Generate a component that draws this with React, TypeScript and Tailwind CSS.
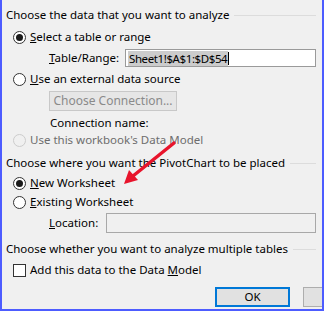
import React from "react";

const font = { fontFamily: '"Noto Sans", "Segoe UI", sans-serif' };

function Radio({ checked, disabled }: { checked?: boolean; disabled?: boolean }) {
  return (
    <span
      className={`w-[13px] h-[13px] rounded-full border flex items-center justify-center shrink-0 ${
        disabled ? "border-[#cccccc] bg-[#f0f0f0]" : "border-[#333333] bg-white"
      }`}
    >
      {checked && <span className="w-[7px] h-[7px] rounded-full bg-[#1a1a1a]" />}
    </span>
  );
}

function Header({ children }: { children: React.ReactNode }) {
  return (
    <div className="flex items-center h-[16px] pl-[4px] pr-[6px]">
      <span className="whitespace-nowrap text-black">{children}</span>
      <span className="flex-1 h-px bg-[#dcdcdc] ml-[5px]" />
    </div>
  );
}

export default function App() {
  return (
    <div
      className="relative w-[324px] h-[311px] bg-[#f0f0f0] border-l-2 border-r-2 border-b-2 border-[#4d5cff] overflow-hidden text-[11.5px] leading-[16px] text-black"
      style={font}
    >
      <div className="flex flex-col">
        <div className="mt-[7px]">
          <Header>Choose the data that you want to analyze</Header>
        </div>
        <div className="mt-[6px] flex items-center h-[16px] pl-[11px] gap-[4px]">
          <Radio checked />
          <span>
            <span className="underline">S</span>elect a table or range
          </span>
        </div>
        <div className="mt-[4px] flex items-center h-[18px] pl-[47px]">
          <span className="w-[76px] shrink-0">
            <span className="underline">T</span>able/Range:
          </span>
          <div className="flex-1 mr-[6px] h-[18px] bg-white border border-[#9a9a9a] flex items-center pl-[2px]">
            <span className="bg-[#cccccc] px-px leading-[15px] tracking-[-0.4px]">Sheet1!$A$1:$D$54</span>
            <span className="w-px h-[13px] bg-black" />
          </div>
        </div>
        <div className="mt-[4px] flex items-center h-[16px] pl-[11px] gap-[4px]">
          <Radio />
          <span>
            <span className="underline">U</span>se an external data source
          </span>
        </div>
        <div className="mt-[4px] pl-[47px] h-[20px] flex">
          <div className="w-[128px] h-[20px] bg-[#e6e6e6] border border-[#c8c8c8] text-[#8a8a8a] text-[12px] flex items-center justify-center">
            Choose Connection...
          </div>
        </div>
        <div className="mt-[4px] h-[16px] pl-[48px] text-black flex items-center">Connection name:</div>
        <div className="mt-[1px] flex items-center h-[16px] pl-[11px] gap-[4px] text-[#6d6d6d]">
          <Radio disabled />
          <span>Use this workbook's Data Model</span>
        </div>
        <div className="mt-[7px]">
          <Header>Choose where you want the PivotChart to be placed</Header>
        </div>
        <div className="mt-[4px] flex items-center h-[16px] pl-[11px] gap-[4px]">
          <Radio checked />
          <span>
            <span className="underline">N</span>ew Worksheet
          </span>
        </div>
        <div className="mt-[3px] flex items-center h-[16px] pl-[11px] gap-[4px]">
          <Radio />
          <span>
            <span className="underline">E</span>xisting Worksheet
          </span>
        </div>
        <div className="mt-[3px] flex items-center h-[20px] pl-[47px]">
          <span className="w-[57px] shrink-0">
            <span className="underline">L</span>ocation:
          </span>
          <div className="flex-1 mr-[6px] h-[20px] bg-[#f0f0f0] border border-[#a8a8a8]" />
        </div>
        <div className="mt-[8px]">
          <Header>Choose whether you want to analyze multiple tables</Header>
        </div>
        <div className="mt-[5px] flex items-center h-[16px] pl-[11px] gap-[4px]">
          <span className="w-[13px] h-[13px] border border-[#333333] bg-white shrink-0" />
          <span>
            Add this data to the Data <span className="underline">M</span>odel
          </span>
        </div>
        <div className="mt-[9px] flex h-[20px] pl-[213px] gap-[13px] w-[400px]">
          <div className="w-[75px] shrink-0 h-[20px] border-2 border-[#0078d7] bg-[#e1e1e1] flex items-center justify-center">
            OK
          </div>
          <div className="w-[75px] h-[20px] border border-[#adadad] bg-[#e1e1e1] shrink-0" />
        </div>
      </div>
      <svg className="absolute left-0 top-0 pointer-events-none" width="324" height="311">
        <line x1="172" y1="143" x2="131" y2="176" stroke="#e8142c" strokeWidth="3.5" strokeLinecap="round" />
        <polygon points="122,184 127,170 136,180" fill="#e8142c" />
      </svg>
    </div>
  );
}
